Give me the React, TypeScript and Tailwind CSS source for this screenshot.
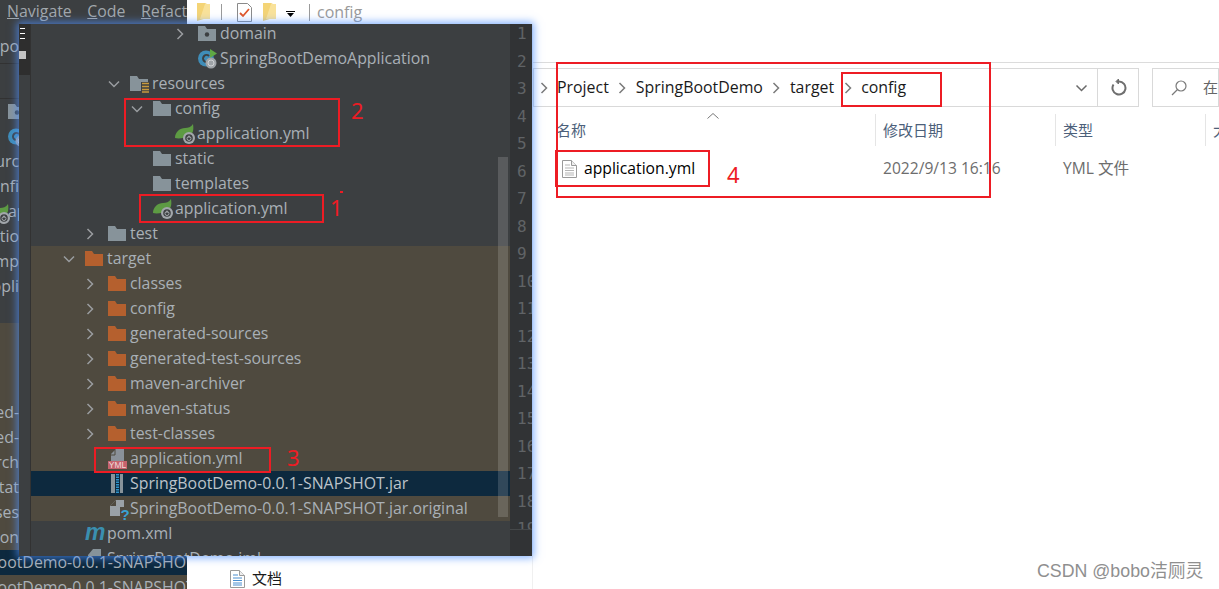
import type { ReactNode } from "react";

const ide = "font-['Open_Sans','Noto_Sans',sans-serif]";

function ChevR({ color = "#9a9da0" }: { color?: string }) {
  return (
    <svg width="8" height="12" viewBox="0 0 8 12" fill="none" stroke={color} strokeWidth="1.5">
      <path d="M1.500 1l5 5-5 5" />
    </svg>
  );
}
function ChevD({ color = "#9a9da0", w = 12 }: { color?: string; w?: number }) {
  return (
    <svg width={w} height="8" viewBox="0 0 12 8" fill="none" stroke={color} strokeWidth="1.5">
      <path d="M1 1.500l5 5 5-5" />
    </svg>
  );
}
function Folder({ color = "#87939a", children }: { color?: string; children?: ReactNode }) {
  return (
    <svg width="18" height="15" viewBox="0 0 18 15">
      <path d="M0 0h7l2 3h9v12H0z" fill={color} />
      {children}
    </svg>
  );
}
function DomainFolder() {
  return (
    <Folder>
      <circle cx="9" cy="8.500" r="2.200" fill="#3c3f41" />
    </Folder>
  );
}
function ResFolder() {
  return (
    <svg width="20" height="18" viewBox="0 0 20 18">
      <path d="M0 1h7l2 3h9v12H0z" fill="#87939a" />
      <rect x="11" y="7" width="9" height="11" fill="#3c3f41" />
      <path d="M12 8.500h7M12 11.500h7M12 14.500h7M12 17h7" stroke="#c79a3e" strokeWidth="1.600" />
    </svg>
  );
}
function Leaf() {
  return (
    <svg width="20" height="20" viewBox="0 0 20 20">
      <path d="M0 14C0 8 5 4 10 4c3 0 6-1 8-4 1 6 0 10-4 12-4 2-10 3-14 2z" fill="#5d9b43" />
      <circle cx="14" cy="14" r="6" fill="#a2a7ab" />
      <circle cx="14" cy="14" r="3.800" fill="#3c3f41" />
      <circle cx="14" cy="14.500" r="2" fill="none" stroke="#a2a7ab" strokeWidth="1" />
      <path d="M14 11.500v2.500" stroke="#a2a7ab" strokeWidth="1" />
    </svg>
  );
}
function JavaRun() {
  return (
    <svg width="20" height="20" viewBox="0 0 20 20">
      <circle cx="8" cy="9.500" r="8" fill="#3f8db8" />
      <path d="M11 7a3.500 3.500 0 1 0 0 5" fill="none" stroke="#3c3f41" strokeWidth="2" />
      <path d="M12 0l7 4.500-7 4.500z" fill="#5fa844" />
      <circle cx="13" cy="14" r="5.500" fill="#9ea3a7" />
      <circle cx="13" cy="14" r="3" fill="none" stroke="#d0d3d5" strokeWidth="1" />
    </svg>
  );
}
function Yml() {
  return (
    <svg width="20" height="20" viewBox="0 0 20 20">
      <path d="M8 0h8v12H3V5z" fill="#8a9199" />
      <path d="M7 1v5H3" fill="none" stroke="#4f4a3f" strokeWidth="1" />
      <rect x="0" y="12" width="19" height="8" fill="#c5636d" />
      <text x="9.500" y="19.200" textAnchor="middle" fontSize="8.500" fontFamily="Liberation Sans, sans-serif" fill="#f0d8da">YML</text>
    </svg>
  );
}
function Jar() {
  return (
    <svg className="ml-[2px]" width="15" height="19" viewBox="0 0 15 19">
      <rect x="1" y="0" width="12" height="19" fill="#87939a" />
      <rect x="5" y="0" width="5" height="19" fill="#0d293e" />
      <path d="M7.500 0v19" stroke="#2f93c9" strokeWidth="3" strokeDasharray="1.500 1" />
    </svg>
  );
}
function Unknown() {
  return (
    <svg className="ml-[2px] mt-[2px] overflow-visible" width="18" height="20" viewBox="0 0 18 20">
      <path d="M0 6l6-6h8v16H0z" fill="#9aa1a6" />
      <path d="M6 0v6H0" fill="#4f4a3f" />
      <rect x="10" y="7" width="8" height="13" fill="#4f4a3f" />
      <text x="10.500" y="20" fontSize="15" fontWeight="700" fontFamily="Liberation Sans, sans-serif" fill="#3aa2d4">?</text>
    </svg>
  );
}
function Doc() {
  return (
    <svg className="ml-[2px]" width="16" height="19" viewBox="0 0 16 19">
      <path d="M1 6l5-6h8v19H1z" fill="#87939a" />
    </svg>
  );
}
function Maven() {
  return <span className="font-['Liberation_Sans',sans-serif] text-[23px] leading-none font-bold italic text-[#3a8fb0] -mt-[3px]">m</span>;
}

type Row = {
  name: string;
  pad: string;
  arrow?: "r" | "d";
  icon: ReactNode;
  bg?: string;
  text?: string;
};

const orange = "#b5602e";
const rows: Row[] = [
  { name: "domain", pad: "pl-[144px]", arrow: "r", icon: <DomainFolder /> },
  { name: "SpringBootDemoApplication", pad: "pl-[144px]", icon: <JavaRun /> },
  { name: "resources", pad: "pl-[76px]", arrow: "d", icon: <ResFolder /> },
  { name: "config", pad: "pl-[99px]", arrow: "d", icon: <Folder /> },
  { name: "application.yml", pad: "pl-[121px]", icon: <Leaf /> },
  { name: "static", pad: "pl-[99px]", icon: <Folder /> },
  { name: "templates", pad: "pl-[99px]", icon: <Folder /> },
  { name: "application.yml", pad: "pl-[99px]", icon: <Leaf /> },
  { name: "test", pad: "pl-[54px]", arrow: "r", icon: <Folder /> },
  { name: "target", pad: "pl-[31px]", arrow: "d", icon: <Folder color={orange} />, bg: "bg-[#4f4a3f]" },
  { name: "classes", pad: "pl-[54px]", arrow: "r", icon: <Folder color={orange} />, bg: "bg-[#4f4a3f]" },
  { name: "config", pad: "pl-[54px]", arrow: "r", icon: <Folder color={orange} />, bg: "bg-[#4f4a3f]" },
  { name: "generated-sources", pad: "pl-[54px]", arrow: "r", icon: <Folder color={orange} />, bg: "bg-[#4f4a3f]" },
  { name: "generated-test-sources", pad: "pl-[54px]", arrow: "r", icon: <Folder color={orange} />, bg: "bg-[#4f4a3f]" },
  { name: "maven-archiver", pad: "pl-[54px]", arrow: "r", icon: <Folder color={orange} />, bg: "bg-[#4f4a3f]" },
  { name: "maven-status", pad: "pl-[54px]", arrow: "r", icon: <Folder color={orange} />, bg: "bg-[#4f4a3f]" },
  { name: "test-classes", pad: "pl-[54px]", arrow: "r", icon: <Folder color={orange} />, bg: "bg-[#4f4a3f]" },
  { name: "application.yml", pad: "pl-[54px]", icon: <Yml />, bg: "bg-[#4f4a3f]" },
  { name: "SpringBootDemo-0.0.1-SNAPSHOT.jar", pad: "pl-[54px]", icon: <Jar />, bg: "bg-[#0d293e]", text: "text-[#bcc3c9]" },
  { name: "SpringBootDemo-0.0.1-SNAPSHOT.jar.original", pad: "pl-[54px]", icon: <Unknown />, bg: "bg-[#4f4a3f]" },
  { name: "pom.xml", pad: "pl-[31px]", icon: <Maven /> },
  { name: "SpringBootDemo.iml", pad: "pl-[31px]", icon: <Doc /> },
];

function TreeRow({ r }: { r: Row }) {
  return (
    <div className={`flex h-[25px] shrink-0 items-center whitespace-nowrap ${r.pad} ${r.bg ?? ""}`}>
      <span className="flex w-[23px] shrink-0 items-center pl-[1px]">
        {r.arrow === "r" ? <ChevR /> : r.arrow === "d" ? <ChevD /> : null}
      </span>
      <span className="flex w-[22px] shrink-0 items-center">{r.icon}</span>
      <span className={r.text ?? "text-[#a9b0b6]"}>{r.name}</span>
    </div>
  );
}

function BackRow({ children, start }: { children?: ReactNode; start?: boolean }) {
  return (
    <div className={`flex h-[25px] w-[19px] shrink-0 items-center overflow-hidden whitespace-nowrap text-[#a9b0b6] ${start ? "justify-start pl-[8px]" : "justify-end"}`}>
      {children}
    </div>
  );
}

function BackWindow() {
  return (
    <div className={`absolute left-0 top-0 flex h-[589px] w-[190px] flex-col overflow-hidden bg-[#3c3f41] text-[15.900px] ${ide}`}>
      <div className="flex h-[24px] shrink-0 items-center gap-[15.500px] pl-[7px] text-[#a2a8ad]">
        <span><u>N</u>avigate</span>
        <span><u>C</u>ode</span>
        <span className="whitespace-nowrap"><u>R</u>efactor</span>
      </div>
      <div className="flex h-[40px] w-[19px] shrink-0 items-center justify-end overflow-hidden border-b border-[#323232] pt-[6px] text-[#a9b0b6]">po</div>
      <div className="h-[35px] w-[19px] shrink-0 border-b border-[#323232]" />
      <BackRow start><span className="flex shrink-0"><DomainFolder /></span></BackRow>
      <BackRow start><span className="flex shrink-0"><JavaRun /></span></BackRow>
      <BackRow>urc</BackRow>
      <BackRow>onfi</BackRow>
      <div className="relative flex h-[25px] w-[19px] shrink-0 items-center overflow-hidden whitespace-nowrap pl-[8px] text-[#a9b0b6]">
        ap
        <span className="absolute -left-[10px] top-[5px]"><Leaf /></span>
      </div>
      <BackRow>atio</BackRow>
      <BackRow>mp</BackRow>
      <BackRow>ppli</BackRow>
      <div className="h-[24px] shrink-0" />
      <div className="flex shrink-0 flex-col bg-[#4f4a3f]">
        <div className="h-[77px] shrink-0" />
        <BackRow>ed-</BackRow>
        <BackRow>ed-</BackRow>
        <BackRow>rch</BackRow>
        <BackRow>tat</BackRow>
        <BackRow>ses</BackRow>
        <BackRow>ion</BackRow>
        <div className="flex h-[25px] w-[190px] shrink-0 items-center overflow-hidden whitespace-nowrap bg-[#0d293e] text-[#a9b0b6]"><span className="-ml-[60px]">SpringBootDemo-0.0.1-SNAPSHOT.jar</span></div>
        <div className="flex h-[25px] w-[190px] shrink-0 items-center overflow-hidden whitespace-nowrap text-[#a9b0b6]"><span className="-ml-[60px]">SpringBootDemo-0.0.1-SNAPSHOT.jar.original</span></div>
      </div>
    </div>
  );
}

function YellowFolder() {
  return (
    <svg width="13" height="18" viewBox="0 0 13 18">
      <path d="M0 0h8l2 1v14l-10 3z" fill="#f4d476" />
      <path d="M8 1h5v15H3z" fill="#f9e29a" />
    </svg>
  );
}

function SmallDoc({ lines = "#b5b5b5" }: { lines?: string }) {
  return (
    <svg width="15" height="18" viewBox="0 0 15 18">
      <path d="M.500.500h9l5 5v12H.500z" fill="#fff" stroke="#9a9a9a" />
      <path d="M9.500.500v5h5" fill="#eee" stroke="#9a9a9a" />
      <path d="M3 5h5M3 8h9M3 10.500h9M3 13h9M3 15h9" stroke={lines} />
    </svg>
  );
}

const colLine = "flex shrink-0 items-center border-l border-[#e5e5e5] pl-[7px]";

function Explorer() {
  return (
    <div className="absolute left-[187px] top-0 flex h-[589px] w-[1032px] flex-col bg-white font-['Open_Sans','Noto_Sans_CJK_SC',sans-serif]">
      <div className="flex h-[24px] shrink-0 items-center pl-[10px]">
        <YellowFolder />
        <span className="ml-[11px] h-[16px] w-px bg-[#9a9a9a]" />
        <span className="ml-[15px] flex">
          <svg width="15" height="19" viewBox="0 0 15 19">
            <path d="M.500.500h10l4 4v14H.500z" fill="#fff" stroke="#8a8a8a" />
            <path d="M3 10l3 3 6-7" fill="none" stroke="#e0562a" strokeWidth="1.800" />
          </svg>
        </span>
        <span className="ml-[11px] flex"><YellowFolder /></span>
        <span className="ml-[10px] mt-[4px] flex flex-col items-center gap-[1px]">
          <span className="h-[1px] w-[9px] bg-black" />
          <svg className="flex" width="7" height="4" viewBox="0 0 7 4"><path d="M0 0h7L3.500 4z" fill="#000" /></svg>
        </span>
        <span className="ml-[14px] h-[17px] w-px bg-[#9a9a9a]" />
        <span className="ml-[7px] text-[16px] text-[#9a9a9a]">config</span>
      </div>
      <div className="flex min-h-0 flex-1">
        <aside className="flex w-[346px] shrink-0 flex-col justify-end border-r border-[#f0f0f0] pb-[1px]">
          <div className="flex h-[19px] items-center pl-[43px]">
            <SmallDoc lines="#4a8fd0" />
            <span className="ml-[7px] font-['Noto_Sans_CJK_SC',sans-serif] text-[15px] text-[#1a1a1a]">文档</span>
          </div>
        </aside>
        <main className="min-w-0 flex-1 text-[15.900px]">
          <div className="h-[39px] border-b border-[#dcdcdc]" />
          <div className="mt-[5px] flex h-[39px] items-stretch">
            <div className="flex w-[606px] shrink-0 items-center border border-[#d9d9d9] text-[#1a1a1a]">
              <span className="flex w-[23px] shrink-0 pl-[6px]"><ChevR color="#7a7a7a" /></span>
              <span>Project</span>
              <span className="flex w-[27px] shrink-0 justify-center"><ChevR color="#7a7a7a" /></span>
              <span>SpringBootDemo</span>
              <span className="flex w-[27px] shrink-0 justify-center"><ChevR color="#7a7a7a" /></span>
              <span>target</span>
              <span className="flex w-[27px] shrink-0 justify-center"><ChevR color="#7a7a7a" /></span>
              <span>config</span>
              <span className="ml-auto flex w-[32px] justify-center"><ChevD color="#6a6a6a" w={13} /></span>
              <span className="flex h-full w-[41px] shrink-0 items-center justify-center border-l border-[#d9d9d9]">
                <svg width="17" height="17" viewBox="0 0 17 17" fill="none" stroke="#6f6f6f" strokeWidth="2"><path d="M9 2.500a6.500 6.500 0 1 1-5.500 3" /><path d="M8.500 0v5L6 2.500z" fill="#6f6f6f" strokeWidth="1" /></svg>
              </span>
            </div>
            <div className="ml-[13px] flex flex-1 items-center border border-[#d9d9d9] pl-[18px] text-[#666]">
              <svg width="16" height="16" viewBox="0 0 16 16" fill="none" stroke="#7a7a7a" strokeWidth="1.200"><circle cx="10" cy="6" r="5" /><path d="M6.500 9.500L1 15" /></svg>
              <span className="ml-[16px] font-['Noto_Sans_CJK_SC',sans-serif] text-[15px]">在</span>
            </div>
          </div>
          <div className="mt-[7px] flex h-[32px] font-['Noto_Sans_CJK_SC',sans-serif] text-[15px] text-[#4c607a]">
            <div className="relative flex w-[342px] shrink-0 items-center pl-[23px]">
              名称
              <span className="absolute -top-[1px] left-[174px] flex">
                <svg width="12" height="6" viewBox="0 0 12 6" fill="none" stroke="#777"><path d="M.500 5.500L6 .500l5.500 5" /></svg>
              </span>
            </div>
            <div className={`${colLine} w-[180px]`}>修改日期</div>
            <div className={`${colLine} w-[150px]`}>类型</div>
            <div className={`${colLine} min-w-0 flex-1 overflow-hidden whitespace-nowrap`}>大小</div>
          </div>
          <div className="mt-[5px] flex h-[36px] items-center text-[15.600px] text-[#6d6d6d]">
            <div className="flex w-[342px] shrink-0 items-center pl-[29px]">
              <SmallDoc />
              <span className="ml-[7px] text-[15.700px] text-black">application.yml</span>
            </div>
            <div className="w-[180px] shrink-0 pl-[8px]">2022/9/13 16:16</div>
            <div className="pl-[8px]">YML 文件</div>
          </div>
        </main>
      </div>
    </div>
  );
}

function IdeFront() {
  const lines = Array.from({ length: 19 }, (_, i) => i + 1);
  return (
    <div className={`absolute left-[19px] top-[24px] flex h-[532px] w-[513px] bg-[#3c3f41] text-[15.900px] shadow-[0_0_8px_2px_rgba(80,145,255,0.7)] ${ide}`}>
      <div className="flex w-[12px] shrink-0 flex-col border-r border-[#323232]">
        <div className="flex h-[51px] flex-col gap-[4px] bg-[#2e2e2e] pt-[4px]">
          <span className="ml-[1px] h-[1px] w-[5px] bg-white" />
          <span className="ml-[1px] h-[1px] w-[5px] bg-white" />
          <span className="ml-[1px] h-[1px] w-[5px] bg-white" />
          <span className="mt-[8px] h-[8px] w-[7px] bg-[#c4c4c4]" />
        </div>
      </div>
      <div className="relative h-full w-[479px] shrink-0 overflow-hidden">
        <div className="-mt-[3px] flex flex-col">
          {rows.map((r, i) => <TreeRow key={i} r={r} />)}
        </div>
        <div className="absolute left-[467px] top-[133px] h-[360px] w-[10px] bg-white/15" />
      </div>
      <div className="flex min-w-0 flex-1 flex-col bg-[#313335]">
        <div className="h-[506px] shrink-0 overflow-hidden border-b border-[#45484a] font-['DejaVu_Sans_Mono',monospace] text-[16px] text-[#606366]">
          <div className="-mt-[4px] pl-[7px] leading-[27.500px]">
            {lines.map((n) => <div key={n} className="h-[27.500px] overflow-hidden whitespace-nowrap">{n}</div>)}
          </div>
        </div>
      </div>
    </div>
  );
}

const redBox = "absolute border-2 border-[#ed1c24]";
const redNum = "absolute font-['Noto_Sans',sans-serif] text-[22px] leading-none text-[#ed1c24]";

export default function App() {
  return (
    <div className="relative h-[589px] w-[1219px] overflow-hidden bg-white">
      <BackWindow />
      <Explorer />
      <IdeFront />
      <div className={`${redBox} left-[124px] top-[98px] h-[49px] w-[216px]`} />
      <div className={`${redBox} left-[139px] top-[194px] h-[29px] w-[185px]`} />
      <div className={`${redBox} left-[94px] top-[447px] h-[26px] w-[177px]`} />
      <div className={`${redBox} left-[556px] top-[62px] h-[136px] w-[435px]`} />
      <div className={`${redBox} left-[841px] top-[72px] h-[35px] w-[101px]`} />
      <div className={`${redBox} left-[555px] top-[150px] h-[37px] w-[155px]`} />
      <span className={`${redNum} left-[351px] top-[99px]`}>2</span>
      <span className={`${redNum} left-[330px] top-[196px]`}>1</span>
      <span className="absolute left-[340px] top-[191px] h-[2px] w-[3px] bg-[#ed1c24]" />
      <span className={`${redNum} left-[287px] top-[446px]`}>3</span>
      <span className={`${redNum} left-[727px] top-[163px]`}>4</span>
      <span className="absolute left-[1037px] top-[560px] whitespace-nowrap font-['Liberation_Sans','Noto_Sans_CJK_SC',sans-serif] text-[17.800px] leading-[22px] text-[#8f8f8f]">CSDN @bobo洁厕灵</span>
    </div>
  );
}
